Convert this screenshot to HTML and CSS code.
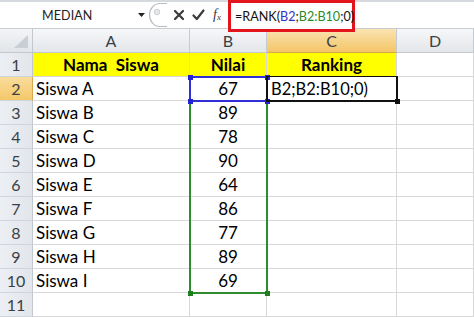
FILE: index.html
```html
<!DOCTYPE html>
<html>
<head>
<meta charset="utf-8">
<link rel="stylesheet" href="styles.css">
</head>
<body>
<div class="fbar">
  <div class="namebox">
    <span class="name">MEDIAN</span>
    <svg class="arrow" width="7" height="4" viewBox="0 0 7 4"><path d="M0 0H7L3.5 4Z" fill="#222"/></svg>
  </div>
  <div class="btns">
    <svg class="grip" width="20" height="26" viewBox="0 0 20 26"><path d="M19 1.5H12A10.5 11.5 0 0 0 12 24.5H19" fill="none" stroke="#b8bcc2" stroke-width="1.2"/><circle cx="9" cy="10" r="2.8" fill="#e6e8ea" stroke="#c4c7cb" stroke-width="0.8"/></svg>
    <svg class="ic" width="12" height="12" viewBox="0 0 12 12"><path d="M2 2L10 10M10 2L2 10" stroke="#3a3a3a" stroke-width="2.2" stroke-linecap="round"/></svg>
    <svg class="ic" width="13" height="12" viewBox="0 0 13 12"><path d="M1.5 6.5L4.8 10L11.5 1.5" fill="none" stroke="#3a3a3a" stroke-width="2.2" stroke-linejoin="round" stroke-linecap="round"/></svg>
    <span class="fx">f<sub>x</sub></span>
  </div>
  <div class="formula">=RANK(<span class="ref-b">B2</span>;<span class="ref-g">B2:B10</span>;0)</div>
</div>
<div class="sheet">
  <div class="grid">
    <div class="corner"><svg width="14" height="13" viewBox="0 0 14 13"><path d="M14 0V13H0Z" fill="#c9ced4"/></svg></div>
    <div class="ch">A</div>
    <div class="ch">B</div>
    <div class="ch sel">C</div>
    <div class="ch">D</div>

    <div class="rh">1</div>
    <div class="c y b ctr pre">Nama  Siswa</div>
    <div class="c y b ctr">Nilai</div>
    <div class="c y b ctr">Ranking</div>
    <div class="c"></div>

    <div class="rh sel">2</div>
    <div class="c">Siswa A</div>
    <div class="c ctr">67</div>
    <div class="c edit">B2;B2:B10;0)</div>
    <div class="c"></div>

    <div class="rh">3</div>
    <div class="c">Siswa B</div>
    <div class="c ctr">89</div>
    <div class="c"></div>
    <div class="c"></div>

    <div class="rh">4</div>
    <div class="c">Siswa C</div>
    <div class="c ctr">78</div>
    <div class="c"></div>
    <div class="c"></div>

    <div class="rh">5</div>
    <div class="c">Siswa D</div>
    <div class="c ctr">90</div>
    <div class="c"></div>
    <div class="c"></div>

    <div class="rh">6</div>
    <div class="c">Siswa E</div>
    <div class="c ctr">64</div>
    <div class="c"></div>
    <div class="c"></div>

    <div class="rh">7</div>
    <div class="c">Siswa F</div>
    <div class="c ctr">86</div>
    <div class="c"></div>
    <div class="c"></div>

    <div class="rh">8</div>
    <div class="c">Siswa G</div>
    <div class="c ctr">77</div>
    <div class="c"></div>
    <div class="c"></div>

    <div class="rh">9</div>
    <div class="c">Siswa H</div>
    <div class="c ctr">89</div>
    <div class="c"></div>
    <div class="c"></div>

    <div class="rh">10</div>
    <div class="c">Siswa I</div>
    <div class="c ctr">69</div>
    <div class="c"></div>
    <div class="c"></div>

    <div class="rh">11</div>
    <div class="c"></div>
    <div class="c"></div>
    <div class="c"></div>
    <div class="c"></div>
  </div>
  <div class="rng green"><i class="h bl"></i><i class="h br"></i></div>
  <div class="rng blue"><i class="h tl"></i><i class="h tr"></i><i class="h bl"></i><i class="h br"></i></div>
  <div class="rng active"><i class="h br"></i></div>
</div>
</body>
</html>
```
FILE: styles.css
```css
* { box-sizing: border-box; }
html, body { margin: 0; padding: 0; background: #fff; overflow: hidden; }
body { width: 474px; height: 317px; font-family: Lato, "Open Sans", sans-serif; color: #000; }

.fbar {
  height: 29px;
  display: flex;
  align-items: center;
  border-top: 2px solid #d6d9dd;
  border-bottom: 1px solid #c9cdd2;
  background: #fff;
}
.namebox {
  width: 148px;
  height: 100%;
  display: flex;
  align-items: center;
  padding-left: 42px;
  padding-right: 3px;
}
.name { font-size: 12.5px; color: #222; letter-spacing: 0.1px; }
.arrow { margin-left: auto; margin-right: 0; }
.btns {
  width: 80px;
  height: 100%;
  display: flex;
  align-items: center;
}
.grip { margin-right: 5px; }
.btns .ic { margin-right: 7px; }
.btns .ic + .ic { margin-right: 8px; }
.fx {
  font-family: "Liberation Serif", serif;
  font-style: italic;
  font-size: 14px;
  color: #3a3a3a;
}
.fx sub { font-size: 9px; vertical-align: -1px; }

.formula {
  position: relative;
  z-index: 3;
  align-self: flex-start;
  margin-top: -2px;
  width: 127px;
  height: 32px;
  border: 3px solid #e3141c;
  background: #fff;
  font-size: 12.6px;
  padding-left: 4px;
  display: flex;
  align-items: center;
  white-space: pre;
  color: #111;
}
.ref-b { color: #3131c8; }
.ref-g { color: #2a8a2a; }

.sheet { position: relative; }
.grid {
  display: grid;
  grid-template-columns: 33px 157px 77px 130px 77px;
  grid-template-rows: 24px repeat(11, 24px);
}
.corner {
  background: linear-gradient(#f3f4f6, #e2e5e9);
  border-right: 1px solid #c3c8ce;
  border-bottom: 1px solid #c3c8ce;
  display: flex;
  align-items: flex-end;
  justify-content: flex-end;
  padding: 0 4px 4px 0;
}
.ch {
  background: linear-gradient(#f6f7f9, #e3e6ea);
  border-right: 1px solid #c6cbd1;
  border-bottom: 1px solid #c3c8ce;
  display: flex;
  align-items: center;
  justify-content: center;
  font-size: 16px;
  color: #3a3f46;
}
.ch.sel { background: linear-gradient(#fae3b1, #f4c567); border-bottom-color: #d6a84a; }
.rh {
  background: linear-gradient(90deg, #eceff3, #e2e6eb);
  border-right: 1px solid #c3c8ce;
  border-bottom: 1px solid #d0d5db;
  display: flex;
  align-items: center;
  justify-content: center;
  font-size: 16px;
  color: #3a3f46;
}
.rh.sel { background: linear-gradient(#f9dc9c, #f4c869); border-right-color: #d6a84a; }

.c {
  border-right: 1px solid #d8d8d8;
  border-bottom: 1px solid #d8d8d8;
  display: flex;
  align-items: center;
  padding-left: 3px;
  font-size: 17px;
  white-space: nowrap;
  overflow: visible;
}
.c.ctr { justify-content: center; padding-left: 0; }
.c.y { background: #ffff00; }
.c.b { font-weight: bold; }
.c.pre { white-space: pre; }
.c.edit { padding-left: 4px; font-size: 16.5px; }

.rng { position: absolute; border-style: solid; }
.rng.green { left: 189px; top: 47px; width: 79px; height: 218px; border-width: 2px; border-color: #2e8c2e; }
.rng.blue { left: 189px; top: 47px; width: 79px; height: 26px; border-width: 2px; border-color: #2f2fd6; }
.rng.active { left: 266px; top: 47px; width: 132px; height: 26px; border-width: 2px; border-color: #111; border-top-width: 1.5px; }
.h { position: absolute; width: 5px; height: 5px; }
.green .h { background: #1f7f1f; }
.blue .h { background: #2323d0; }
.active .h { background: #111; }
.h.tl { left: -3.5px; top: -3.5px; }
.h.tr { right: -3.5px; top: -3.5px; }
.h.bl { left: -3.5px; bottom: -3.5px; }
.h.br { right: -3.5px; bottom: -3.5px; }
```
